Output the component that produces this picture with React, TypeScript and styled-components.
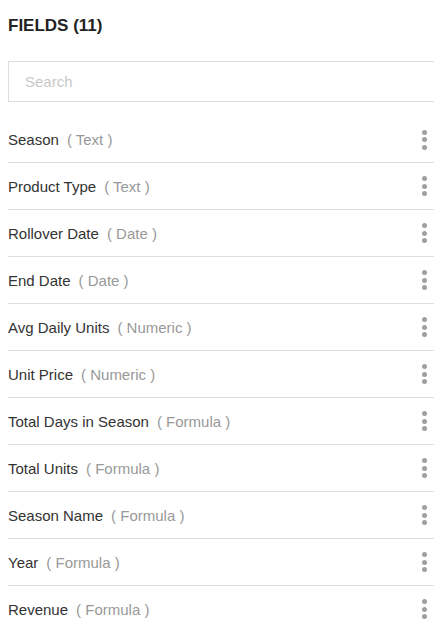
import styled, { createGlobalStyle } from 'styled-components';

const GlobalStyle = createGlobalStyle`
  html, body {
    margin: 0;
    padding: 0;
    background: #fff;
  }
  body {
    font-family: 'Liberation Sans', Arial, sans-serif;
    overflow: hidden;
  }
`;

const Panel = styled.div`
  width: 434px;
  height: 626px;
  padding-left: 8px;
  box-sizing: border-box;
  overflow: hidden;
`;

const Title = styled.h2`
  margin: 0;
  padding-top: 16px;
  height: 20px;
  line-height: 20px;
  font-size: 17px;
  font-weight: 700;
  color: #222;
`;

const SearchInput = styled.input`
  display: block;
  margin-top: 25px;
  width: 440px;
  height: 41px;
  box-sizing: border-box;
  padding: 0 16px;
  border: 1px solid #ddd;
  border-right: none;
  outline: none;
  font-family: inherit;
  font-size: 15px;
  color: #333;

  &::placeholder {
    color: #c8c8c8;
  }
`;

const List = styled.ul`
  list-style: none;
  margin: 14px 0 0;
  padding: 0;
`;

const Row = styled.li<{ first?: boolean }>`
  display: flex;
  align-items: center;
  height: 47px;
  box-sizing: border-box;
  border-bottom: 1px solid #ddd;
  padding-top: ${({ first }) => (first ? '1px' : '0')};
  padding-right: 5px;
  font-size: 15px;
`;

const Name = styled.span`
  color: #333;
`;

const Type = styled.span`
  margin-left: 8px;
  color: #999;
`;

const Menu = styled.button`
  margin-left: auto;
  width: 10px;
  padding: 0;
  border: none;
  background: none;
  display: flex;
  flex-direction: column;
  align-items: center;
  gap: 2.5px;
  cursor: pointer;

  span {
    display: block;
    width: 5px;
    height: 5px;
    border-radius: 50%;
    background: #a0a0a0;
  }
`;

type Field = { name: string; type: string };

const fields: Field[] = [
  { name: 'Season', type: 'Text' },
  { name: 'Product Type', type: 'Text' },
  { name: 'Rollover Date', type: 'Date' },
  { name: 'End Date', type: 'Date' },
  { name: 'Avg Daily Units', type: 'Numeric' },
  { name: 'Unit Price', type: 'Numeric' },
  { name: 'Total Days in Season', type: 'Formula' },
  { name: 'Total Units', type: 'Formula' },
  { name: 'Season Name', type: 'Formula' },
  { name: 'Year', type: 'Formula' },
  { name: 'Revenue', type: 'Formula' },
];

const App = () => {
  return (
    <>
      <GlobalStyle />
      <Panel>
        <Title>FIELDS ({fields.length})</Title>
        <SearchInput placeholder='Search' />
        <List>
          {fields.map((field, i) => (
            <Row key={field.name} first={i === 0}>
              <Name>{field.name}</Name>
              <Type>( {field.type} )</Type>
              <Menu aria-label='Field options'>
                <span />
                <span />
                <span />
              </Menu>
            </Row>
          ))}
        </List>
      </Panel>
    </>
  );
};

export default App;
